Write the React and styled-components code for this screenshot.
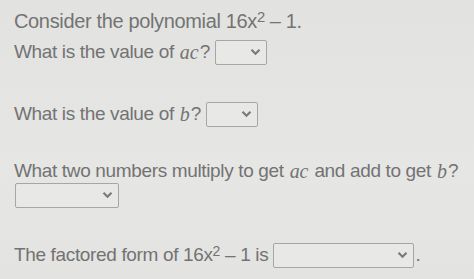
import React from "react";
import styled, { createGlobalStyle } from "styled-components";

const GlobalStyle = createGlobalStyle`
  html, body {
    margin: 0;
    padding: 0;
    background: #e4e4e2;
  }
  body {
    font-family: "Liberation Sans", Arial, sans-serif;
  }
`;

const Page = styled.div`
  width: 474px;
  height: 279px;
  box-sizing: border-box;
  padding: 9px 0 0 14px;
  background: linear-gradient(180deg, #e2e2e0 0%, #e6e6e4 60%, #e3e3e1 100%);
  color: #737373;
  letter-spacing: -0.35px;
  overflow: hidden;
`;

const Line = styled.div`
  display: flex;
  align-items: center;
  height: 24px;
  margin-top: ${p => p.$gap || 0}px;
  font-size: ${p => p.$size || 19}px;
  white-space: nowrap;
`;

const Var = styled.i`
  font-family: "Liberation Serif", "Times New Roman", serif;
  font-size: 1.05em;
  letter-spacing: 0;
  margin: 0 1px;
`;

const Sup = styled.sup`
  font-size: 0.74em;
  position: relative;
  top: -4px;
  margin: 0 5px 0 0;
`;

const Select = styled.div`
  display: inline-flex;
  align-items: center;
  justify-content: flex-end;
  box-sizing: border-box;
  width: ${p => p.$w}px;
  height: 25px;
  margin-left: ${p => p.$ml ?? 5}px;
  margin-right: 1px;
  padding-right: 5px;
  border: 1px solid #a6a6a6;
  border-radius: 2px;
  background: #e8e8e6;
`;

function Chevron() {
  return (
    <svg width="11" height="8" viewBox="0 0 11 8">
      <path d="M1.5 1.8 L5.5 5.8 L9.5 1.8" fill="none" stroke="#7a7a7a" strokeWidth="2.2" />
    </svg>
  );
}

function Dropdown({ w, ml }) {
  return (
    <Select $w={w} $ml={ml}>
      <Chevron />
    </Select>
  );
}

export default function App() {
  return (
    <Page>
      <GlobalStyle />
      <Line $size={20}>
        Consider the polynomial 16<span>x</span>
        <Sup>2</Sup>– 1.
      </Line>
      <Line $gap={7}>
        What is the value of&nbsp;<Var>ac</Var>?
        <Dropdown w={52} />
      </Line>
      <Line $gap={38}>
        What is the value of&nbsp;<Var>b</Var>?
        <Dropdown w={52} />
      </Line>
      <Line $gap={33}>
        What two numbers multiply to get&nbsp;<Var>ac</Var>&nbsp;and add to get&nbsp;
        <Var>b</Var>?
      </Line>
      <Line>
        <Dropdown w={104} ml={1} />
      </Line>
      <Line $gap={36}>
        The factored form of 16<span>x</span>
        <Sup>2</Sup>– 1 is
        <Dropdown w={141} />.
      </Line>
    </Page>
  );
}
